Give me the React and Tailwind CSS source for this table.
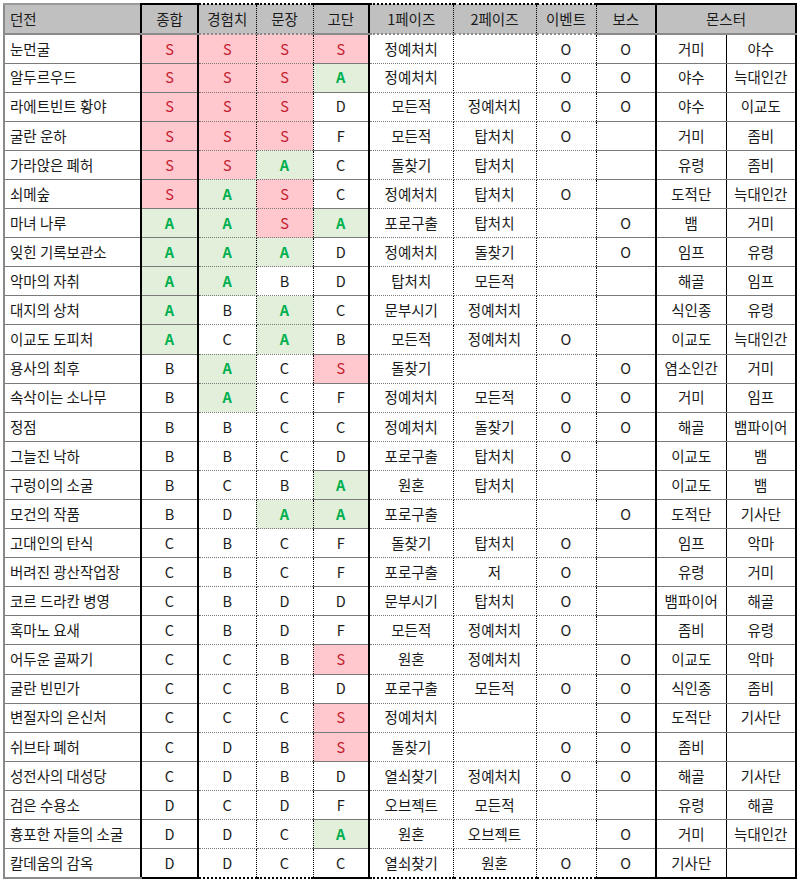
const rows = [
  ['눈먼굴', 'S', 'S', 'S', 'S', '정예처치', '', 'O', 'O', '거미', '야수'],
  ['알두르우드', 'S', 'S', 'S', 'A', '정예처치', '', 'O', 'O', '야수', '늑대인간'],
  ['라에트빈트 황야', 'S', 'S', 'S', 'D', '모든적', '정예처치', 'O', 'O', '야수', '이교도'],
  ['굴란 운하', 'S', 'S', 'S', 'F', '모든적', '탑처치', 'O', '', '거미', '좀비'],
  ['가라앉은 폐허', 'S', 'S', 'A', 'C', '돌찾기', '탑처치', '', '', '유령', '좀비'],
  ['쇠메숲', 'S', 'A', 'S', 'C', '정예처치', '탑처치', 'O', '', '도적단', '늑대인간'],
  ['마녀 나루', 'A', 'A', 'S', 'A', '포로구출', '탑처치', '', 'O', '뱀', '거미'],
  ['잊힌 기록보관소', 'A', 'A', 'A', 'D', '정예처치', '돌찾기', '', 'O', '임프', '유령'],
  ['악마의 자취', 'A', 'A', 'B', 'D', '탑처치', '모든적', '', '', '해골', '임프'],
  ['대지의 상처', 'A', 'B', 'A', 'C', '문부시기', '정예처치', '', '', '식인종', '유령'],
  ['이교도 도피처', 'A', 'C', 'A', 'B', '모든적', '정예처치', 'O', '', '이교도', '늑대인간'],
  ['용사의 최후', 'B', 'A', 'C', 'S', '돌찾기', '', '', 'O', '염소인간', '거미'],
  ['속삭이는 소나무', 'B', 'A', 'C', 'F', '정예처치', '모든적', 'O', 'O', '거미', '임프'],
  ['정점', 'B', 'B', 'C', 'C', '정예처치', '돌찾기', 'O', 'O', '해골', '뱀파이어'],
  ['그늘진 낙하', 'B', 'B', 'C', 'D', '포로구출', '탑처치', 'O', '', '이교도', '뱀'],
  ['구렁이의 소굴', 'B', 'C', 'B', 'A', '원혼', '탑처치', '', '', '이교도', '뱀'],
  ['모건의 작품', 'B', 'D', 'A', 'A', '포로구출', '', '', 'O', '도적단', '기사단'],
  ['고대인의 탄식', 'C', 'B', 'C', 'F', '돌찾기', '탑처치', 'O', '', '임프', '악마'],
  ['버려진 광산작업장', 'C', 'B', 'C', 'F', '포로구출', '저', 'O', '', '유령', '거미'],
  ['코르 드라칸 병영', 'C', 'B', 'D', 'D', '문부시기', '탑처치', 'O', '', '뱀파이어', '해골'],
  ['혹마노 요새', 'C', 'B', 'D', 'F', '모든적', '정예처치', 'O', '', '좀비', '유령'],
  ['어두운 골짜기', 'C', 'C', 'B', 'S', '원혼', '정예처치', '', 'O', '이교도', '악마'],
  ['굴란 빈민가', 'C', 'C', 'B', 'D', '포로구출', '모든적', 'O', 'O', '식인종', '좀비'],
  ['변절자의 은신처', 'C', 'C', 'C', 'S', '정예처치', '', '', 'O', '도적단', '기사단'],
  ['쉬브타 폐허', 'C', 'D', 'B', 'S', '돌찾기', '', 'O', 'O', '좀비', ''],
  ['성전사의 대성당', 'C', 'D', 'B', 'D', '열쇠찾기', '정예처치', 'O', 'O', '해골', '기사단'],
  ['검은 수용소', 'D', 'C', 'D', 'F', '오브젝트', '모든적', '', '', '유령', '해골'],
  ['흉포한 자들의 소굴', 'D', 'D', 'C', 'A', '원혼', '오브젝트', '', 'O', '거미', '늑대인간'],
  ['칼데움의 감옥', 'D', 'D', 'C', 'C', '열쇠찾기', '원혼', 'O', 'O', '기사단', ''],
];

const widths = [137, 57, 58, 57, 56, 84, 83, 60, 60, 70, 70];

// right-edge border per column
const edge = [
  'border-r-2 border-r-black',
  'border-r-2 border-r-black',
  'border-r border-r-black border-dotted',
  'border-r border-r-black border-dotted',
  'border-r-2 border-r-black',
  'border-r border-r-black border-dotted',
  'border-r border-r-black border-dotted',
  'border-r border-r-black border-dotted',
  'border-r-2 border-r-black',
  'border-r border-r-black',
  'border-r-2 border-r-black',
];

function gradeTone(v) {
  if (v === 'S') return 'bg-[#ffc7ce] text-[#c4212f]';
  if (v === 'A') return 'bg-[#e2efda] text-[#00b050] font-bold';
  return 'bg-white text-[#1a1a1a]';
}

export default function App() {
  const last = rows.length - 1;
  return (
    <div className="w-[800px] h-[882px] bg-white pl-[3px] pt-[3px] font-['Noto_Sans_CJK_KR','Noto_Sans',sans-serif] text-[14.5px] leading-none text-[#1a1a1a]">
      <table className="table-fixed border-collapse w-[792px]">
        <colgroup>
          {widths.map((w, i) => (
            <col key={i} style={{ width: w }} />
          ))}
        </colgroup>
        <thead>
          <tr className="h-[30px] bg-[#c0c0c0]">
            <th className="border-l-2 border-l-[#8a8a8a] border-t-2 border-t-[#9a9a9a] border-b-2 border-b-[#8a8a8a] border-r-2 border-r-black text-left font-normal pl-[5px]">
              던전
            </th>
            {['종합', '경험치', '문장', '고단', '1페이즈', '2페이즈', '이벤트', '보스'].map((h, i) => (
              <th
                key={h}
                className={`border-t-2 border-t-black border-b-2 border-b-[#8a8a8a] font-normal text-center ${edge[i + 1]}`}
              >
                {h}
              </th>
            ))}
            <th colSpan={2} className="border-t-2 border-t-black border-b-2 border-b-[#8a8a8a] border-r-2 border-r-black font-normal text-center">
              몬스터
            </th>
          </tr>
        </thead>
        <tbody>
          {rows.map((r, ri) => (
            <tr key={ri} className="h-[29.1px]">
              {r.map((v, ci) => {
                const bottom =
                  ri === last
                    ? ci === 0
                      ? 'border-b-2 border-b-[#8a8a8a]'
                      : 'border-b-2 border-b-black'
                    : 'border-b border-b-[#7a7a7a]';
                const tone = ci >= 1 && ci <= 4 ? gradeTone(v) : 'bg-white';
                const align = ci === 0 ? 'text-left pl-[5px] border-l-2 border-l-[#8a8a8a]' : 'text-center';
                return (
                  <td key={ci} className={`${edge[ci]} ${bottom} ${tone} ${align} whitespace-nowrap p-0`}>
                    {v}
                  </td>
                );
              })}
            </tr>
          ))}
        </tbody>
      </table>
    </div>
  );
}
